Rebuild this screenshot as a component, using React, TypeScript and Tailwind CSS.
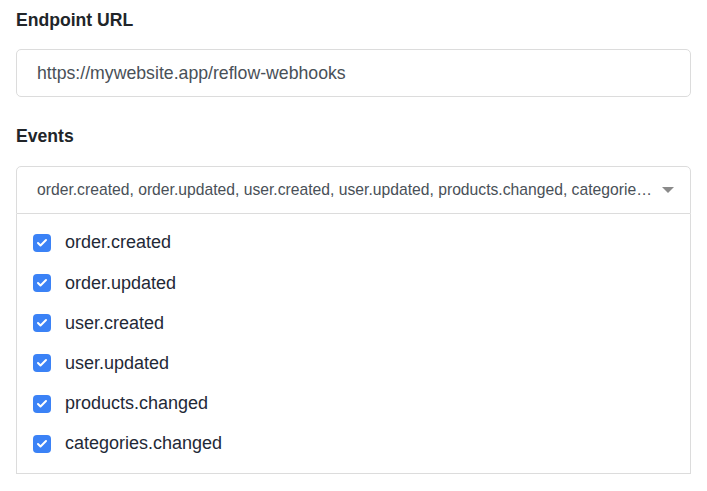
import { Check } from 'lucide-react';

const events = [
  'order.created',
  'order.updated',
  'user.created',
  'user.updated',
  'products.changed',
  'categories.changed',
];

export default function App() {
  return (
    <div
      className="min-h-screen w-full bg-white px-4 pt-[7px]"
      style={{ fontFamily: '"Liberation Sans", Arial, sans-serif' }}
    >
      {/* Endpoint */}
      <label className="block text-[17.6px] leading-[26.4px] font-bold text-[#212529]">
        Endpoint URL
      </label>
      <div className="mt-4 flex h-[48px] w-[675px] items-center rounded-[5px] border border-[#dcdcdc] px-5 text-[17.7px] text-[#495057]">
        https://mywebsite.app/reflow-webhooks
      </div>

      {/* Events */}
      <label className="mt-[26px] block text-[17.6px] leading-[26.4px] font-bold text-[#212529]">
        Events
      </label>
      <div className="mt-4 w-[675px]">
        <div className="flex h-[48px] items-center gap-[6px] rounded-t-[5px] border border-[#dcdcdc] pl-5 pr-[15px]">
          <span className="min-w-0 flex-1 truncate text-[15.7px] text-[#495057]">
            {events.join(', ')}
          </span>
          <svg width="14" height="8" viewBox="0 0 14 8" className="shrink-0">
            <path d="M1 1h12L7 7z" fill="#8a8a8a" />
          </svg>
        </div>
        <div className="border-x border-b border-[#dcdcdc] py-[9px]">
          {events.map((ev) => (
            <div key={ev} className="flex h-[40.2px] items-center gap-[14px] pl-4">
              <span className="flex h-[18px] w-[18px] items-center justify-center rounded-[4px] bg-[#3b82f6]">
                <Check size={12} strokeWidth={4} className="text-white" />
              </span>
              <span className="text-[18px] text-[#1f2937]">{ev}</span>
            </div>
          ))}
        </div>
      </div>
    </div>
  );
}
